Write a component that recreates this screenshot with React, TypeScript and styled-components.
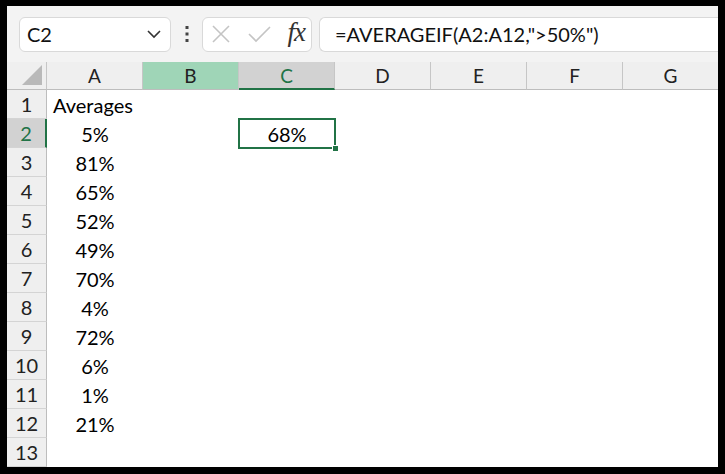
import React from 'react';
import styled, { createGlobalStyle } from 'styled-components';

const GlobalStyle = createGlobalStyle`
  html, body {
    margin: 0;
    padding: 0;
    background: #000;
  }
  * {
    box-sizing: border-box;
  }
`;

const FONT = `Lato, "Open Sans", "Noto Sans", sans-serif`;
const GREEN = '#217346';
const COLUMNS = ['A', 'B', 'C', 'D', 'E', 'F', 'G'];

const rows: { a: string; c?: string; left?: boolean }[] = [
  { a: 'Averages', left: true },
  { a: '5%', c: '68%' },
  { a: '81%' },
  { a: '65%' },
  { a: '52%' },
  { a: '49%' },
  { a: '70%' },
  { a: '4%' },
  { a: '72%' },
  { a: '6%' },
  { a: '1%' },
  { a: '21%' },
  { a: '' },
];

const Frame = styled.div`
  width: 725px;
  height: 474px;
  background: #000;
  padding: 6px 7px 7px 7px;
`;

const Window = styled.div`
  width: 100%;
  height: 100%;
  background: #fff;
  display: flex;
  flex-direction: column;
  overflow: hidden;
  font-family: ${FONT};
`;

const Toolbar = styled.div`
  height: 56px;
  flex-shrink: 0;
  background: #f3f3f3;
  display: flex;
  align-items: center;
  padding-left: 12px;
`;

const Field = styled.div`
  height: 35px;
  background: #fff;
  border: 1px solid #d9d9d9;
  border-radius: 6px;
  display: flex;
  align-items: center;
`;

const NameBox = styled(Field)`
  width: 152px;
  padding: 0 8px 0 7px;
  justify-content: space-between;
  font-size: 20px;
  color: #111;
`;

const Dots = styled.div`
  width: 31px;
  display: flex;
  justify-content: center;
  color: #444;
`;

const FxBox = styled(Field)`
  width: 110px;
  padding: 0 6px 0 8px;
  justify-content: space-between;
`;

const FxLabel = styled.span`
  font-family: "Liberation Serif", "DejaVu Serif", serif;
  font-style: italic;
  font-size: 27px;
  color: #333;
  line-height: 1;
  letter-spacing: -1px;
  padding-bottom: 3px;
`;

const FormulaBox = styled(Field)`
  flex: 1;
  margin-left: 7px;
  border-right: none;
  border-radius: 6px 0 0 6px;
  padding-left: 15px;
  font-size: 20px;
  color: #111;
`;

const Grid = styled.div`
  display: grid;
  grid-template-columns: 40px repeat(7, 96px);
  grid-auto-rows: 29px;
  grid-template-rows: 28px;
`;

const Corner = styled.div`
  background: #efefef;
  border-right: 1px solid #c6c6c6;
  border-bottom: 1px solid #bdbdbd;
  position: relative;
`;

const CornerTriangle = styled.div`
  position: absolute;
  right: 4px;
  bottom: 4px;
  width: 0;
  height: 0;
  border-left: 20px solid transparent;
  border-bottom: 20px solid #b9b9b9;
`;

const ColHeader = styled.div<{ $state?: 'range' | 'active' }>`
  background: ${(p) =>
    p.$state === 'range' ? '#9fd5b7' : p.$state === 'active' ? '#d2d2d2' : '#efefef'};
  border-right: 1px solid #c6c6c6;
  border-bottom: ${(p) => (p.$state === 'active' ? `2px solid ${GREEN}` : '1px solid #bdbdbd')};
  display: flex;
  align-items: center;
  justify-content: center;
  font-size: 19px;
  color: ${(p) => (p.$state === 'active' ? GREEN : '#222')};
  padding-top: ${(p) => (p.$state === 'active' ? '1px' : '0')};
`;

const RowHeader = styled.div<{ $active?: boolean }>`
  background: ${(p) => (p.$active ? '#d2d2d2' : '#efefef')};
  border-right: ${(p) => (p.$active ? `2px solid ${GREEN}` : '1px solid #bdbdbd')};
  border-bottom: 1px solid #d4d4d4;
  display: flex;
  align-items: center;
  justify-content: center;
  font-size: 20px;
  color: ${(p) => (p.$active ? GREEN : '#222')};
`;

const Cell = styled.div<{ $left?: boolean; $selected?: boolean }>`
  position: relative;
  display: flex;
  align-items: center;
  justify-content: ${(p) => (p.$left ? 'flex-start' : 'center')};
  padding-left: ${(p) => (p.$left ? '6px' : '0')};
  font-size: 20px;
  color: #000;
  white-space: nowrap;
  overflow: visible;
  outline: ${(p) => (p.$selected ? `2px solid ${GREEN}` : 'none')};
  outline-offset: -1px;
  z-index: ${(p) => (p.$selected ? 1 : 0)};
`;

const FillHandle = styled.div`
  position: absolute;
  right: -4px;
  bottom: -4px;
  width: 7px;
  height: 7px;
  background: ${GREEN};
  border: 1px solid #fff;
`;

const Chevron = () => (
  <svg width="16" height="10" viewBox="0 0 16 10">
    <path d="M2 2 L8 8 L14 2" fill="none" stroke="#333" strokeWidth="1.6" />
  </svg>
);

const VerticalDots = () => (
  <svg width="4" height="18" viewBox="0 0 4 18">
    <rect x="0.5" y="1" width="3" height="3" fill="#444" />
    <rect x="0.5" y="7.5" width="3" height="3" fill="#444" />
    <rect x="0.5" y="14" width="3" height="3" fill="#444" />
  </svg>
);

const CrossIcon = () => (
  <svg width="20" height="20" viewBox="0 0 20 20">
    <path d="M2 2 L18 18 M18 2 L2 18" stroke="#c4c4c4" strokeWidth="1.6" fill="none" />
  </svg>
);

const CheckIcon = () => (
  <svg width="24" height="20" viewBox="0 0 24 20">
    <path d="M2 10 L9 17 L23 3" stroke="#c4c4c4" strokeWidth="1.6" fill="none" />
  </svg>
);

export default function App() {
  return (
    <>
      <GlobalStyle />
      <Frame>
        <Window>
          <Toolbar>
            <NameBox>
              <span>C2</span>
              <Chevron />
            </NameBox>
            <Dots>
              <VerticalDots />
            </Dots>
            <FxBox>
              <CrossIcon />
              <CheckIcon />
              <FxLabel>fx</FxLabel>
            </FxBox>
            <FormulaBox>=AVERAGEIF(A2:A12,"&gt;50%")</FormulaBox>
          </Toolbar>

          <Grid>
            <Corner>
              <CornerTriangle />
            </Corner>
            {COLUMNS.map((col) => (
              <ColHeader
                key={col}
                $state={col === 'B' ? 'range' : col === 'C' ? 'active' : undefined}
              >
                {col}
              </ColHeader>
            ))}

            {rows.map((row, i) => (
              <React.Fragment key={i}>
                <RowHeader $active={i === 1}>{i + 1}</RowHeader>
                <Cell $left={row.left}>{row.a}</Cell>
                <Cell />
                <Cell $selected={!!row.c}>
                  {row.c}
                  {row.c && <FillHandle />}
                </Cell>
                <Cell />
                <Cell />
                <Cell />
                <Cell />
              </React.Fragment>
            ))}
          </Grid>
        </Window>
      </Frame>
    </>
  );
}
